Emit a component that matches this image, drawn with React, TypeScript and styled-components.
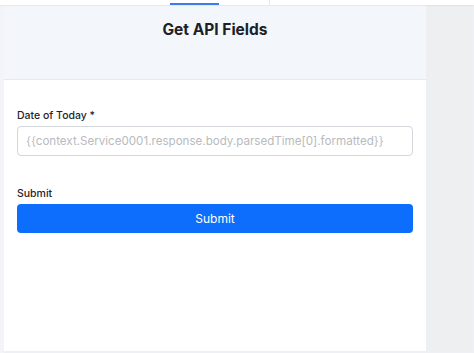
import React from "react";
import styled, {createGlobalStyle} from "styled-components";

const Global = createGlobalStyle`
	html, body {
		margin: 0;
		padding: 0;
		background: #eef0f3;
		font-family: Inter, "Noto Sans", sans-serif;
	}
`;

export default function App() {
	return (
		<>
			<Global />
			<Page>
				<TopBar>
					<TabSlot />
					<Tab active />
					<Tab />
					<Divider />
				</TopBar>
				<Main>
					<Gutter />
					<Panel>
						<Header>
							<Title>Get API Fields</Title>
						</Header>
						<Form>
							<Field>
								<Label>Date of Today *</Label>
								<Input
									readOnly
									placeholder="{{context.Service0001.response.body.parsedTime[0].formatted}}"
								/>
							</Field>
							<Field>
								<Label>Submit</Label>
								<Button>Submit</Button>
							</Field>
						</Form>
					</Panel>
					<Side />
				</Main>
			</Page>
		</>
	);
}

const Page = styled.div`
	width: 474px;
	height: 353px;
	display: flex;
	flex-direction: column;
	overflow: hidden;
`;

const TopBar = styled.div`
	height: 5px;
	flex: 0 0 auto;
	background: #fff;
	display: flex;
	box-shadow: 0 1px 2px rgba(0, 0, 0, 0.06);
	position: relative;
	z-index: 1;
`;

const TabSlot = styled.div`
	width: 170px;
`;

const Tab = styled.div<{active?: boolean}>`
	width: ${(p) => (p.active ? "49px" : "50px")};
	border-bottom: 2px solid ${(p) => (p.active ? "#3b7de8" : "transparent")};
`;

const Divider = styled.div`
	width: 1px;
	background: #e8eaee;
`;

const Main = styled.div`
	flex: 1;
	display: flex;
	min-height: 0;
`;

const Gutter = styled.div`
	width: 4px;
	background: #f3f4f7;
`;

const Panel = styled.div`
	width: 422px;
	height: 346px;
	background: #fff;
	display: flex;
	flex-direction: column;
`;

const Side = styled.div`
	width: 46px;
	height: 346px;
	background: #eeeff1;
`;

const Header = styled.div`
	height: 75px;
	background: #f3f7fc;
	border-bottom: 1px solid #e6e9ee;
	display: flex;
	justify-content: center;
	padding-top: 15px;
	box-sizing: border-box;
`;

const Title = styled.h1`
	margin: 0;
	font-size: 15.5px;
	font-weight: 700;
	color: #1d2127;
	line-height: 20px;
`;

const Form = styled.div`
	padding: 29px 13px 0;
	display: flex;
	flex-direction: column;
	gap: 31px;
`;

const Field = styled.div`
	display: flex;
	flex-direction: column;
	gap: 3px;
`;

const Label = styled.label`
	font-size: 10.5px;
	font-weight: 500;
	color: #1f2329;
	line-height: 14px;
`;

const Input = styled.input`
	height: 30px;
	box-sizing: border-box;
	border: 1px solid #d3d6db;
	border-radius: 4px;
	padding: 0 8px;
	font-family: Inter, "Noto Sans", sans-serif;
	font-size: 11.6px;
	outline: none;
	&::placeholder {
		color: #b8bbc0;
	}
`;

const Button = styled.button`
	height: 29px;
	border: none;
	border-radius: 4px;
	background: #0d6efd;
	color: #fff;
	font-family: Inter, "Noto Sans", sans-serif;
	font-size: 12px;
	cursor: pointer;
`;
